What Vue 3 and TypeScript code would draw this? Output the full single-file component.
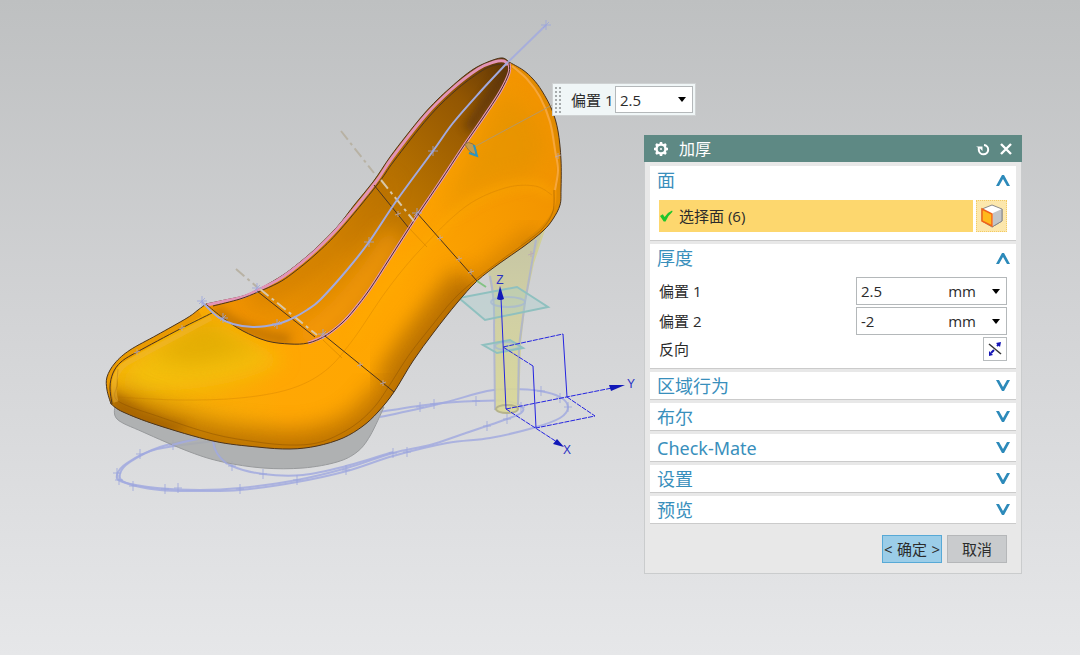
<script setup lang="ts">
import { reactive, ref } from 'vue'

type Pt = [number, number]

// Smooth curve through the points (Catmull-Rom converted to cubic segments)
function curve(p: Pt[], join = false): string {
  let d = `${join ? 'L' : 'M'}${p[0][0]} ${p[0][1]}`
  for (let i = 0; i < p.length - 1; i++) {
    const a = p[Math.max(i - 1, 0)]
    const b = p[i]
    const c = p[i + 1]
    const e = p[Math.min(i + 2, p.length - 1)]
    d += `C${b[0] + (c[0] - a[0]) / 6} ${b[1] + (c[1] - a[1]) / 6} ${c[0] - (e[0] - b[0]) / 6} ${c[1] - (e[1] - b[1]) / 6} ${c[0]} ${c[1]}`
  }
  return d
}

const topLine: Pt[] = [[206, 304], [225, 300], [243, 296], [257, 290], [275, 280], [290, 270], [313, 251], [337, 227], [355, 204], [373, 182], [390, 157], [406, 136], [423, 115], [437, 100], [450, 88], [464, 76], [477, 67], [493, 60], [503, 58], [509, 62]]
const back: Pt[] = [[509, 62], [523, 70], [533, 79], [542, 91], [552, 110], [558, 131], [561, 160], [561, 190], [560, 205], [553, 219], [543, 231], [523, 247], [500, 263], [477, 281], [457, 303], [434, 332], [413, 361], [394, 392], [378, 412], [363, 426], [343, 438], [317, 446], [290, 449], [257, 447], [213, 441], [157, 425], [123, 412], [111, 404]]
const toe: Pt[] = [[111, 404], [107, 390], [107, 377], [115, 363], [130, 350], [157, 335], [187, 318], [198, 310], [206, 304]]
const throat: Pt[] = [[509, 63], [509, 73], [500, 92], [483, 118], [463, 147], [440, 182], [417, 216], [390, 258], [370, 289], [354, 310], [342, 323], [325, 336], [308, 343], [290, 344], [267, 341], [243, 331], [223, 318], [207, 305]]
const rim: Pt[] = [[207, 305], [225, 301], [243, 297], [258, 290], [276, 281], [291, 271], [314, 252], [338, 228], [375, 183], [392, 158], [425, 116], [452, 89], [478, 69], [494, 62], [504, 61], [508, 65]]
const innerRim: Pt[] = [[213, 306], [240, 299], [258, 292], [278, 283], [293, 273], [316, 254], [340, 230], [377, 185], [394, 161], [428, 118], [455, 91], [480, 72], [495, 65], [505, 65]]
const spine: Pt[] = [[507, 63], [480, 92], [453, 123], [433, 151], [397, 200], [369, 242], [347, 270], [320, 300], [307, 310], [293, 318], [277, 324], [253, 327], [233, 324], [218, 317], [202, 302]]
const toeSeam: Pt[] = [[212, 313], [180, 329], [137, 352], [121, 362], [113, 373], [110, 387], [112, 404]]

const body = curve(topLine) + curve(back, true) + curve(toe, true) + 'Z'
const opening = curve(topLine) + curve(throat, true) + 'Z'
const heelEdge = curve(back.slice(0, 12))
const shank = curve([[394, 392], [413, 361], [434, 332], [457, 303], [474, 284]])
const foreEdge = curve([[395, 391], [378, 412], [363, 426], [343, 438], [317, 446], [290, 449], [257, 447], [213, 441], [157, 425], [123, 412], [111, 404]])
const seamInset = curve([[118, 369], [117, 385], [118, 401], [160, 417], [213, 434], [257, 442], [290, 445], [317, 443], [340, 434], [360, 421], [376, 405], [389, 386], [409, 355], [430, 328], [453, 300], [475, 280], [500, 261], [525, 243], [543, 228], [553, 211], [554, 190]])
const heelRidge = curve([[512, 66], [527, 79], [540, 97], [550, 122], [555, 150], [558, 170], [555, 190]])
const fold = curve([[117, 397], [180, 400], [240, 398], [290, 389], [325, 371], [352, 341], [387, 290], [420, 250], [465, 207], [505, 188], [535, 186], [552, 195]])
const heelPad = curve([[352, 341], [387, 290], [420, 250], [465, 207], [505, 188], [535, 186], [552, 195]])
const sole = curve([[115, 404], [117, 419], [143, 432], [190, 452], [223, 462], [263, 468], [303, 468], [337, 462], [357, 452], [370, 436], [384, 407]]) + 'Z'

const prints: string[] = [
  curve([[214, 441], [157, 449], [127, 463], [117, 475], [123, 482], [157, 488], [200, 490], [240, 488], [297, 480], [347, 468], [393, 453], [430, 445], [463, 434], [507, 419], [521, 413], [522, 407], [507, 401], [477, 401], [433, 404], [380, 412]]),
  curve([[198, 439], [160, 447], [130, 462], [120, 474], [126, 483], [160, 490], [200, 491], [240, 490], [297, 482], [347, 471], [393, 456], [447, 443], [490, 438], [533, 428], [560, 418], [568, 407], [560, 397], [540, 391], [513, 389], [487, 391], [447, 402], [413, 410], [380, 417]]),
  curve([[214, 441], [217, 453], [232, 466], [263, 474], [303, 475], [343, 467], [393, 452]]),
]
const ticks: Pt[] = [[117, 473], [119, 480], [133, 486], [165, 489], [178, 488], [240, 489], [297, 480], [346, 470], [393, 453], [407, 452], [140, 454], [173, 445], [232, 466], [263, 474], [420, 407], [434, 404], [476, 401], [487, 426], [507, 419], [541, 391], [560, 398], [568, 407], [521, 407]]
const stars: Pt[] = [[202, 301], [223, 318], [277, 324], [369, 242], [433, 151], [417, 213], [546, 25], [257, 288], [323, 334]]
const smallTicks: Pt[] = [[137, 352], [182, 328], [360, 365], [383, 383], [440, 238], [459, 259], [471, 272], [531, 254], [398, 214], [558, 156]]

const offset1 = ref('2.5')
const offset2 = ref('-2')
const open = reactive({ face: true, thickness: true })
const closed = ['区域行为', '布尔', 'Check-Mate', '设置', '预览']
</script>

<template>
  <main class="viewport">
    <svg class="scene" viewBox="0 0 1080 655" preserveAspectRatio="xMinYMin meet" role="img" aria-label="鞋模型">
      <defs>
        <linearGradient id="skin" gradientUnits="userSpaceOnUse" x1="130" y1="320" x2="560" y2="200">
          <stop offset="0" stop-color="#f4b108" />
          <stop offset=".28" stop-color="#ffa704" />
          <stop offset=".6" stop-color="#ffa600" />
          <stop offset="1" stop-color="#f29400" />
        </linearGradient>
        <linearGradient id="lining" gradientUnits="userSpaceOnUse" x1="510" y1="70" x2="260" y2="330">
          <stop offset="0" stop-color="#663a06" />
          <stop offset=".15" stop-color="#925602" />
          <stop offset=".42" stop-color="#b57000" />
          <stop offset=".7" stop-color="#d98700" />
          <stop offset="1" stop-color="#ef9200" />
        </linearGradient>
        <linearGradient id="stiletto" x1="0" y1="0" x2="0" y2="1">
          <stop offset="0" stop-color="#c4c39f" />
          <stop offset=".45" stop-color="#d0cf9f" />
          <stop offset="1" stop-color="#dad896" />
        </linearGradient>
        <filter id="soft5" x="-30%" y="-30%" width="160%" height="160%"><feGaussianBlur stdDeviation="5" /></filter>
        <filter id="soft10" x="-30%" y="-30%" width="160%" height="160%"><feGaussianBlur stdDeviation="10" /></filter>
        <clipPath id="bodyClip"><path :d="body" /></clipPath>
        <clipPath id="openClip"><path :d="opening" /></clipPath>
      </defs>

      <g class="print ground"><path v-for="d in prints" :key="d" :d="d" /></g>
      <g class="tick">
        <path v-for="(t, i) in ticks" :key="i" :d="`M${t[0]} ${t[1] - 5}v10M${t[0] - 4} ${t[1]}h8`" />
      </g>
      <path :d="sole" fill="#a9abac" fill-opacity=".88" stroke="#989a9c" />
      <path d="M213 441q1 13 14 23M198 439Q186 441 172 445" class="print ground" />

      <path d="M488 272L494 307L495 410Q506 417 518 409L520 343L525 300L533 263L544 228Z" fill="url(#stiletto)" fill-opacity=".9" />
      <path d="M544 230L533 263L525 300L520 343L518 408" fill="none" stroke="#d0cf98" stroke-width="2" />
      <g class="print heel">
        <path d="M490 276Q495 300 494 325L495 410M536 240L525 302L519 346L518 405" />
        <ellipse cx="508" cy="302" rx="17" ry="5" />
        <ellipse cx="507" cy="346" rx="12" ry="4" />
      </g>
      <ellipse cx="507" cy="409" rx="11" ry="4" fill="none" stroke="#b5b38c" stroke-width="2" />
      <g class="plane">
        <path d="M459 298L517 287L548 307L485 320Z" />
        <path d="M483 345L510 340L523 348L497 353Z" />
      </g>

      <path :d="body" fill="url(#skin)" />
      <g clip-path="url(#bodyClip)">
        <path d="M125 375Q160 330 220 325Q260 345 285 360Q230 395 125 390Z" fill="#f3c20c" opacity=".8" filter="url(#soft10)" />
        <path d="M205 318Q235 340 260 350L190 365L150 355Z" fill="#dba600" opacity=".65" filter="url(#soft10)" />
        <path :d="foreEdge" class="shade" stroke="#a86400" stroke-width="42" opacity=".6" filter="url(#soft10)" />
        <path :d="foreEdge" class="shade" stroke="#b87000" stroke-width="15" opacity=".5" filter="url(#soft5)" />
        <path d="M112 385Q130 410 190 425L160 437L107 410Z" fill="#925300" opacity=".5" filter="url(#soft5)" />
        <path :d="shank" class="shade" stroke="#985800" stroke-width="48" opacity=".6" filter="url(#soft10)" />
        <path :d="shank" class="shade" stroke="#af6800" stroke-width="12" opacity=".4" filter="url(#soft5)" />
        <path d="M475 285Q510 258 540 235" class="shade" stroke="#c27600" stroke-width="22" opacity=".6" filter="url(#soft10)" />
        <path :d="heelPad" class="shade" stroke="#ffac06" stroke-width="12" opacity=".35" filter="url(#soft5)" />
        <path d="M502 95Q540 110 545 150L530 175Q480 180 440 215Z" fill="#dd9200" opacity=".5" filter="url(#soft10)" />
        <path :d="heelEdge" class="shade" stroke="#c97d00" stroke-width="9" opacity=".4" />
        <path :d="heelRidge" class="shade" stroke="#f5a63c" stroke-width="2" />
        <path :d="fold" class="shade" stroke="#b66d00" opacity=".25" />
        <path :d="seamInset" class="shade" stroke="#8d5400" opacity=".5" />
        <path d="M116 402Q109 375 127 363L211 318" class="shade" stroke="#f0b63c" stroke-width="5" opacity=".45" />
        <path d="M109 400Q104 375 118 361L200 313" class="shade" stroke="#e08300" stroke-width="7" opacity=".5" />
        <path :d="curve(toeSeam)" class="edge" />
      </g>

      <path :d="opening" fill="url(#lining)" />
      <g clip-path="url(#openClip)">
        <path d="M255 300Q350 250 390 180" class="shade" stroke="#b46b00" stroke-width="14" opacity=".4" filter="url(#soft10)" />
        <path d="M300 340Q350 310 395 235" class="shade" stroke="#ffa008" stroke-width="20" opacity=".65" filter="url(#soft10)" />
        <path d="M215 310Q245 335 290 340" class="shade" stroke="#9d5d00" stroke-width="11" opacity=".5" filter="url(#soft5)" />
        <path d="M509 68L468 130" class="shade" stroke="#573207" stroke-width="12" opacity=".65" filter="url(#soft5)" />
      </g>
      <path :d="body" class="edge" />
      <path :d="curve(rim)" fill="none" stroke="#e294b8" stroke-width="3" />
      <path :d="curve(innerRim)" class="edge" />
      <path :d="curve(throat.slice(0, 13))" fill="none" stroke="#e596b5" stroke-width="3" />
      <path :d="curve(throat)" class="edge" />
      <path d="M257 291L315 337M325 336L394 392M374 185L408 227M417 213L477 281" class="edge" />
      <path d="M341 131L374 173M236 269L257 287" class="datum outer" />
      <path d="M381 180L414 221M260 289L317 335" class="datum" />
      <path d="M408 227L427 247M323 340L342 358" stroke="#b77100" opacity=".4" />
      <path d="M477 281L486 287" stroke="#83c384" stroke-width="2" />
      <path :d="curve(spine)" class="print" />
      <path d="M546 25L507 63" class="print ground" />
      <g class="tick">
        <path v-for="(t, i) in stars" :key="i" :d="`M${t[0]} ${t[1] - 5}v10M${t[0] - 5} ${t[1]}h10M${t[0] - 3} ${t[1] + 3}l6 -6`" />
      </g>
      <g class="tick light">
        <path v-for="(t, i) in smallTicks" :key="i" :d="`M${t[0]} ${t[1] - 3}v6M${t[0] - 3} ${t[1] + 1}l6 -2`" />
      </g>

      <path d="M474 147L552 105" stroke="#aa997e" opacity=".8" />
      <path d="M465 144Q468 141 473 144Q477 149 476 155Q468 152 465 144Z" fill="#c59a4a" stroke="#98763c" />
      <path d="M474 145L477 156L469 153" fill="none" stroke="#2a96c4" stroke-width="2" />

      <g class="axis">
        <path d="M506 409L501 298" />
        <path d="M506 409L612 388M506 409L557 442" stroke-dasharray="5 1" />
        <path d="M563 334L567 397M533 366L536 428" />
        <path d="M533 366L503 347L563 334M567 397L595 416L536 428" stroke-dasharray="5 1" />
      </g>
      <g fill="#1118b8">
        <path d="M500 286L504 299Q500 301 497 299Z" />
        <path d="M625 385L611 391L609 385Z" />
        <path d="M564 447L553 444L557 439Z" />
      </g>
      <g class="letter">
        <text x="500" y="284">Z</text>
        <text x="631" y="388">Y</text>
        <text x="567" y="454">X</text>
      </g>
    </svg>

    <form class="floater" @submit.prevent>
      <svg class="grip" viewBox="0 0 8 28" aria-hidden="true">
        <path d="M2 1v28M6 1v28" stroke="#a5aaab" stroke-width="2" stroke-dasharray="2 2" />
      </svg>
      <label for="quick">偏置 1</label>
      <div class="combo quick">
        <input id="quick" v-model="offset1" type="text" />
        <button type="button" class="drop" aria-label="选项"><svg viewBox="0 0 8 5"><path d="M0 0H8L4 5Z" /></svg></button>
      </div>
    </form>

    <section class="dialog" role="dialog" aria-labelledby="dialog-title">
      <header class="titlebar">
        <svg class="gear" viewBox="0 0 16 16" aria-hidden="true">
          <circle cx="8" cy="8" r="4.500" fill="none" stroke="#fff" stroke-width="2.500" />
          <path d="M8 1v2M8 13v2M1 8h2M13 8h2M3 3l2 2M11 11l2 2M13 3l-2 2M5 11l-2 2" stroke="#fff" stroke-width="2.500" />
          <circle cx="8" cy="8" r="1" fill="#fff" />
        </svg>
        <h1 id="dialog-title">加厚</h1>
        <button type="button" aria-label="重置">
          <svg viewBox="0 0 16 16"><path d="M9 4A4.700 4.700 0 1 1 3.800 9V6" fill="none" stroke="#fff" stroke-width="2" /><path d="M1 5.500H7.500V10L5 7.500Z" fill="#fff" /></svg>
        </button>
        <button type="button" aria-label="关闭">
          <svg viewBox="0 0 16 16"><path d="M3 3L13 13M13 3L3 13" stroke="#fff" stroke-width="2.400" /></svg>
        </button>
      </header>

      <div class="groups">
        <section class="group">
          <h2>
            <button type="button" :aria-expanded="open.face" @click="open.face = !open.face">
              <span>面</span>
              <svg class="chevron" :class="{ up: open.face }" viewBox="0 0 14 12"><path d="M0 0H3L7 7L11 0H14L8 11H6Z" /></svg>
            </button>
          </h2>
          <div v-if="open.face" class="pick">
            <button type="button" class="picked">
              <svg viewBox="0 0 14 12"><path d="M0 6L3 4L5 7Q8 2 13 0Q14 1 13 2Q8 6 6 12H4Z" fill="#20c52c" /></svg>
              <span>选择面 (6)</span>
            </button>
            <button type="button" class="cube" aria-label="面规则">
              <svg viewBox="0 0 24 24">
                <path d="M12 1L22 5V17L12 23L2 17V5Z" fill="#fff" stroke="#8b8b8b" />
                <path d="M13 9L22 5V17L13 22Z" fill="#c3c5c7" />
                <path d="M22 5V17L12 23" fill="none" stroke="#85878a" />
                <path d="M2 5L12 10V22L2 17Z" fill="#ffb91c" stroke="#f0641b" stroke-width="1.500" />
              </svg>
            </button>
          </div>
        </section>

        <section class="group">
          <h2>
            <button type="button" :aria-expanded="open.thickness" @click="open.thickness = !open.thickness">
              <span>厚度</span>
              <svg class="chevron" :class="{ up: open.thickness }" viewBox="0 0 14 12"><path d="M0 0H3L7 7L11 0H14L8 11H6Z" /></svg>
            </button>
          </h2>
          <div v-if="open.thickness" class="fields">
            <div class="field">
              <label for="offset-1">偏置 1</label>
              <div class="combo">
                <input id="offset-1" v-model="offset1" type="text" />
                <span class="unit">mm</span>
                <button type="button" class="drop" aria-label="选项"><svg viewBox="0 0 8 5"><path d="M0 0H8L4 5Z" /></svg></button>
              </div>
            </div>
            <div class="field">
              <label for="offset-2">偏置 2</label>
              <div class="combo">
                <input id="offset-2" v-model="offset2" type="text" />
                <span class="unit">mm</span>
                <button type="button" class="drop" aria-label="选项"><svg viewBox="0 0 8 5"><path d="M0 0H8L4 5Z" /></svg></button>
              </div>
            </div>
            <div class="field">
              <label for="reverse">反向</label>
              <button id="reverse" type="button" class="reverse">
                <svg viewBox="0 0 16 16">
                  <path d="M2 3L14 13" stroke="#333" stroke-width="1.500" />
                  <path d="M10 5L12 3M4 12L7 9" stroke="#1515b5" stroke-width="2" />
                  <path d="M14 1L13 6L9 2ZM2 15L2 10L6 14Z" fill="#1515b5" />
                </svg>
              </button>
            </div>
          </div>
        </section>

        <section v-for="name in closed" :key="name" class="group">
          <h2>
            <button type="button" aria-expanded="false">
              <span>{{ name }}</span>
              <svg class="chevron" viewBox="0 0 14 12"><path d="M0 0H3L7 7L11 0H14L8 11H6Z" /></svg>
            </button>
          </h2>
        </section>
      </div>

      <footer class="actions">
        <button type="button" class="ok"><span>&lt;</span><span>确定</span><span>&gt;</span></button>
        <button type="button" class="cancel">取消</button>
      </footer>
    </section>
  </main>
</template>

<style>
body {
  margin: 0;
}
</style>

<style scoped>
.viewport {
  position: relative;
  min-height: 100vh;
  overflow: hidden;
  background: linear-gradient(#bec0c1, #d3d4d6 50%, #e6e7e9);
  color: #2b2b2b;
  font: 15px/20px "Open Sans", "Noto Sans CJK SC", sans-serif;
}
button,
input {
  margin: 0;
  padding: 0;
  border: 0;
  background: none;
  color: inherit;
  font: inherit;
}
button svg {
  display: block;
}

/* Model view */
.scene {
  display: block;
  width: 100%;
  max-width: 1080px;
}
.print {
  fill: none;
  stroke: #a2aadf;
  stroke-width: 2;
}
.ground {
  stroke-opacity: 0.85;
}
.heel {
  stroke: #aab0d2;
  stroke-opacity: 0.8;
}
.tick {
  fill: none;
  stroke: #9ba5dc;
  stroke-opacity: 0.8;
}
.light {
  stroke: #b9a7b3;
}
.shade {
  fill: none;
}
.edge {
  fill: none;
  stroke: #4a3420;
}
.datum {
  fill: none;
  stroke: #d8c7a8;
  stroke-width: 2;
  stroke-dasharray: 11 4 3 4;
}
.outer {
  stroke: #b8b2a4;
}
.plane {
  fill: #9fd0cd;
  fill-opacity: 0.28;
  stroke: #8fc0bf;
  stroke-width: 2;
}
.axis {
  fill: none;
  stroke: #2424e0;
}
.letter {
  fill: #2a31c4;
  font-family: "Liberation Sans", sans-serif;
  font-size: 12px;
  text-anchor: middle;
}

/* On-canvas value box */
.floater {
  position: absolute;
  top: 83px;
  left: 552px;
  box-sizing: border-box;
  display: flex;
  align-items: center;
  width: 144px;
  height: 33px;
  padding: 0 2px 0 1px;
  border: 1px solid #cfd2d3;
  background: #f0f6f7;
}
.grip {
  width: 8px;
  height: 28px;
}
.floater label {
  flex: 1;
  padding-left: 9px;
  white-space: nowrap;
}
.combo {
  box-sizing: border-box;
  display: flex;
  align-items: center;
  width: 151px;
  height: 28px;
  border: 1px solid #b4b8ba;
  background: #fff;
}
.quick {
  width: 78px;
  height: 27px;
}
.combo input {
  flex: 1;
  min-width: 0;
  padding-left: 4px;
}
.unit {
  padding-right: 10px;
}
.drop {
  display: grid;
  place-items: center;
  width: 20px;
  height: 100%;
}
.drop svg {
  width: 8px;
  height: 5px;
}

/* Dialog */
.dialog {
  position: absolute;
  top: 135px;
  left: 644px;
  box-sizing: border-box;
  width: 378px;
  border: 1px solid #cacccd;
  border-top: 0;
  background: #e8e8e8;
}
.titlebar {
  display: flex;
  align-items: center;
  height: 27px;
  margin: 0 -1px;
  padding: 0 8px 0 9px;
  background: #5e8984;
  color: #fff;
}
.titlebar svg {
  width: 16px;
  height: 16px;
}
.titlebar h1 {
  flex: 1;
  margin: 0 0 0 10px;
  font-size: 16px;
  font-weight: 400;
  line-height: 20px;
}
.titlebar button + button {
  margin-left: 7px;
}
.groups {
  display: grid;
  gap: 3px;
  padding: 4px 5px 0;
}
.group {
  border-bottom: 1px solid #cbcbcb;
  background: #fff;
}
h2 {
  margin: 0;
  font-family: "Noto Sans", "Noto Sans CJK SC", sans-serif;
  font-size: 18px;
  font-weight: 400;
}
h2 button {
  display: flex;
  align-items: center;
  justify-content: space-between;
  width: 100%;
  height: 27px;
  padding: 0 6px 0 7px;
  color: #398fbc;
  line-height: 27px;
}
h2 span {
  padding-top: 2px;
}
.chevron {
  width: 14px;
  height: 12px;
  fill: #2d8aba;
}
.up {
  transform: rotate(180deg);
}
.pick {
  display: flex;
  gap: 3px;
  padding: 7px 9px 8px;
}
.picked {
  display: flex;
  flex: 1;
  align-items: center;
  gap: 6px;
  height: 32px;
  padding-left: 1px;
  background: #fdd76e;
}
.picked svg {
  width: 13px;
  height: 12px;
}
.cube {
  display: grid;
  place-items: center;
  width: 31px;
  height: 32px;
  border: 1px dotted #f3cb63;
  background: #fce7ac;
}
.cube svg {
  width: 24px;
  height: 24px;
}
.fields {
  display: grid;
  gap: 2px;
  padding: 6px 9px 7px;
}
.field {
  display: flex;
  align-items: center;
  justify-content: space-between;
}
.reverse {
  display: grid;
  place-items: center;
  width: 24px;
  height: 24px;
  border: 1px solid #b8bcbe;
}
.reverse svg {
  width: 16px;
  height: 16px;
}
.actions {
  display: flex;
  justify-content: flex-end;
  gap: 5px;
  padding: 11px 14px 10px;
}
.actions button {
  box-sizing: border-box;
  width: 60px;
  height: 28px;
  border: 1px solid #b5b7b9;
  background: #c9cbcd;
}
.actions .ok {
  display: flex;
  align-items: center;
  justify-content: space-between;
  padding: 0 1px;
  border-color: #57a9d6;
  background: #9bcde8;
}
</style>
